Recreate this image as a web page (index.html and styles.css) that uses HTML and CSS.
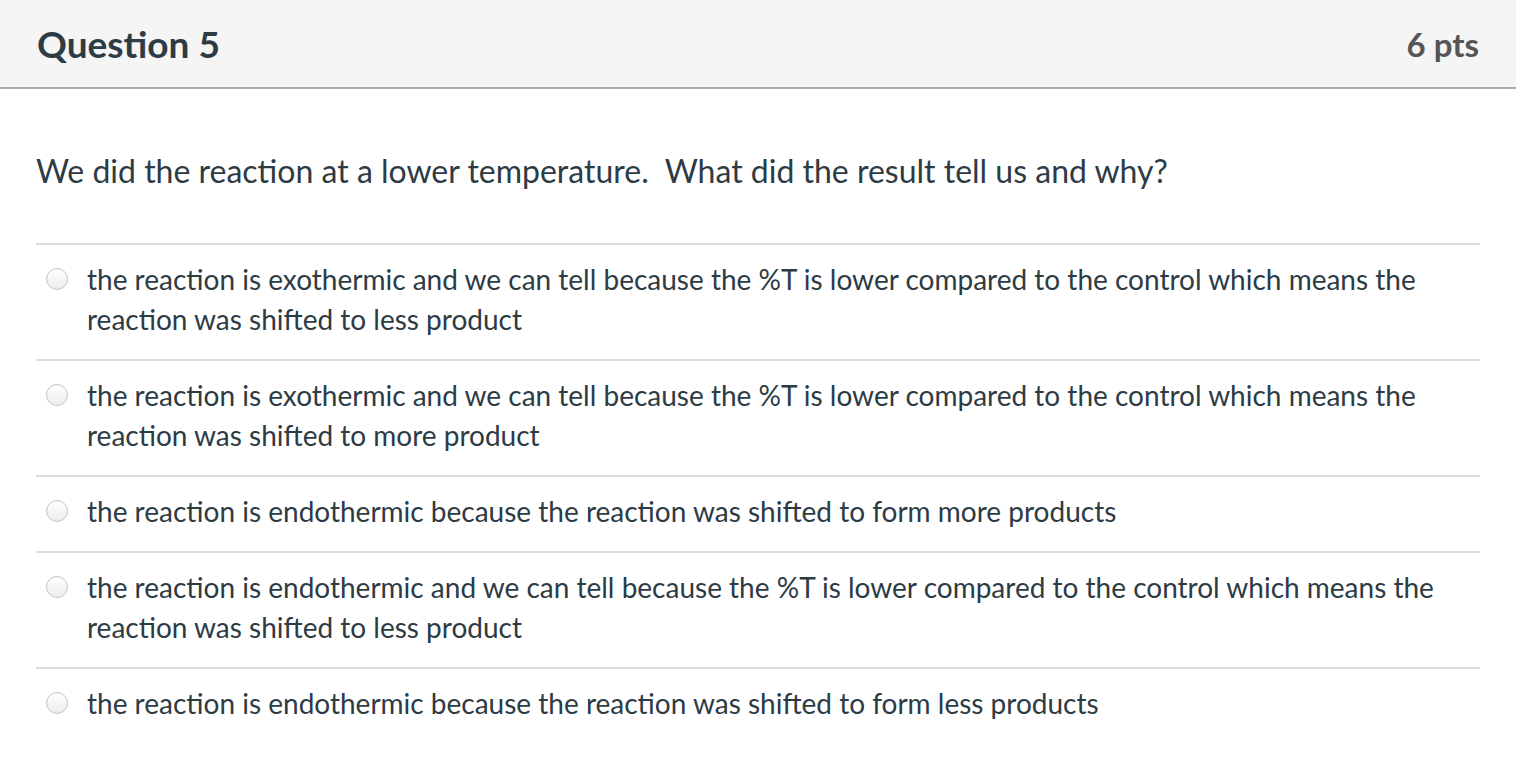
FILE: index.html
```html
<!DOCTYPE html>
<html>
<head>
<meta charset="utf-8">
<link rel="stylesheet" href="styles.css">
</head>
<body>
<div class="question">
  <div class="header">
    <h2 class="title">Question 5</h2>
    <span class="pts">6 pts</span>
  </div>
  <div class="body">
    <p class="prompt">We did the reaction at a lower temperature.&nbsp; What did the result tell us and why?</p>
    <div class="answers">
      <label class="answer"><span class="radio"></span><span class="atext">the reaction is exothermic and we can tell because the %T is lower compared to the control which means the reaction was shifted to less product</span></label>
      <label class="answer"><span class="radio"></span><span class="atext">the reaction is exothermic and we can tell because the %T is lower compared to the control which means the reaction was shifted to more product</span></label>
      <label class="answer"><span class="radio"></span><span class="atext">the reaction is endothermic because the reaction was shifted to form more products</span></label>
      <label class="answer"><span class="radio"></span><span class="atext">the reaction is endothermic and we can tell because the %T is lower compared to the control which means the reaction was shifted to less product</span></label>
      <label class="answer"><span class="radio"></span><span class="atext">the reaction is endothermic because the reaction was shifted to form less products</span></label>
    </div>
  </div>
</div>
</body>
</html>
```
FILE: styles.css
```css
html, body {
  margin: 0;
  padding: 0;
  background: #fff;
}
body {
  font-family: Lato, "Open Sans", sans-serif;
  color: #2d3b45;
}
.header {
  height: 89px;
  box-sizing: border-box;
  background: #f5f5f5;
  border-bottom: 2px solid #aaaaaa;
  display: flex;
  align-items: center;
  justify-content: space-between;
  padding: 0 37px;
}
.title {
  margin: 0;
  font-size: 37px;
  font-weight: 700;
  color: #2d3b45;
}
.pts {
  font-size: 33px;
  font-weight: 700;
  color: #555555;
}
.body {
  padding: 0 36px;
}
.prompt {
  margin: 0;
  padding-top: 62px;
  padding-bottom: 52px;
  font-size: 32px;
  line-height: 40px;
}
.answers {
  border-top: 2px solid #dddddd;
}
.answer {
  display: flex;
  align-items: flex-start;
  padding: 14px 0 20px;
  border-bottom: 2px solid #dddddd;
  font-size: 28px;
  line-height: 40px;
}
.answer:last-child {
  border-bottom: none;
}
.radio {
  flex: none;
  width: 22px;
  height: 22px;
  box-sizing: border-box;
  border: 1px solid #c4c4c4;
  border-radius: 50%;
  background: linear-gradient(#ffffff, #ececec);
  margin: 9px 19px 0 10px;
}
.atext {
  flex: 1;
  padding-right: 20px;
}
```
